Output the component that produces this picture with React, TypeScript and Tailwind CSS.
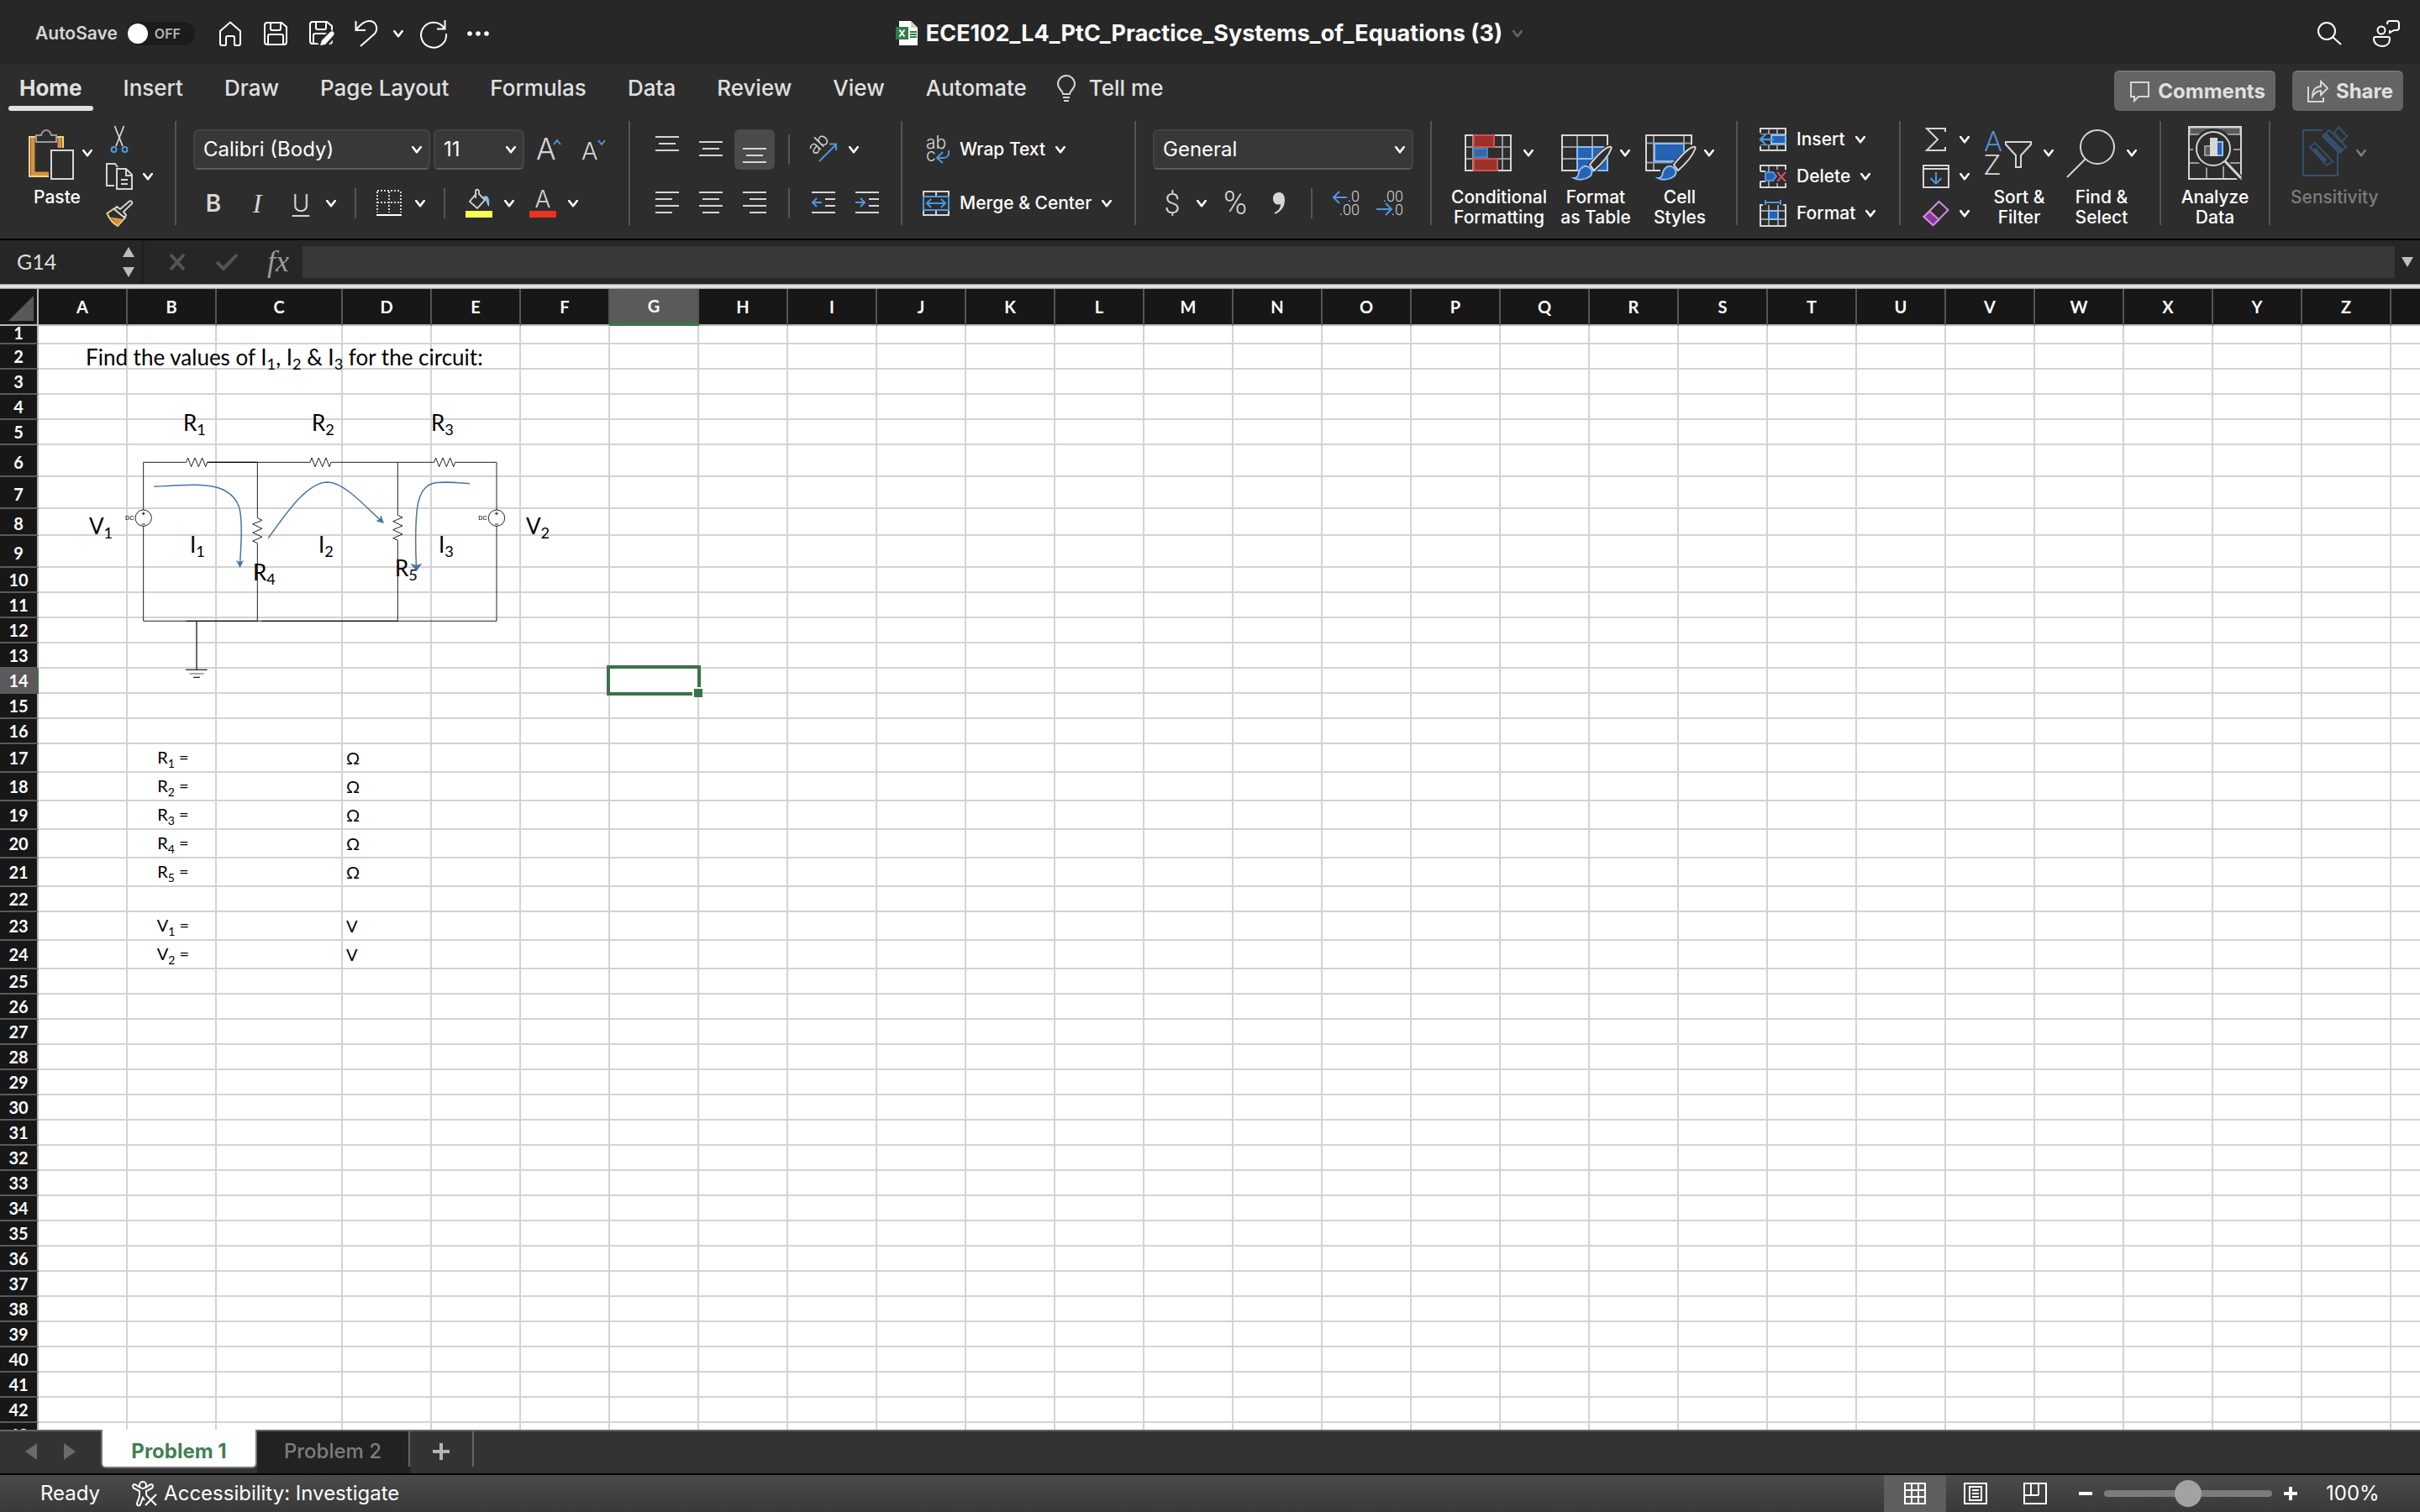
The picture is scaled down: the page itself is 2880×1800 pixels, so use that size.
import { ReactNode, useState } from "react";
import { clsx } from "clsx";

const LIGHT = "#d6d6d6";
const BLUE = "#4f97dc";
const FILL = "#2763b5";
const SKY = "#8cbdf0";

/* ---------- small building blocks ---------- */

const Chevron = ({ className }: { className?: string }) => (
	<svg viewBox="0 0 12 9" className={clsx("h-[9px] w-3 shrink-0", className)} fill="none" stroke="currentColor" strokeWidth="2.6">
		<path d="M1.2 1 6 7.2 10.8 1" strokeLinecap="round" strokeLinejoin="round" />
	</svg>
);

const Divider = () => <div className="h-[124px] w-0.5 shrink-0 bg-[#555555]" />;
const ShortDivider = ({ className }: { className?: string }) => <div className={clsx("h-9 w-0.5 shrink-0 bg-[#555555]", className)} />;

type IconProps = { w: number; h: number; children: ReactNode; className?: string; stroke?: string };

const Icon = ({ w, h, children, className, stroke = LIGHT }: IconProps) => (
	<svg width={w} height={h} viewBox={`0 0 ${w} ${h}`} fill="none" stroke={stroke} strokeWidth="2" className={clsx("shrink-0 overflow-visible", className)}>
		{children}
	</svg>
);

const IconButton = ({ label, children, className }: { label: string; children: ReactNode; className?: string }) => (
	<button type="button" aria-label={label} className={clsx("flex shrink-0 items-center justify-center", className)}>
		{children}
	</button>
);

type BigButtonProps = { lines: string[]; icon: ReactNode; chevron?: boolean; gap?: string; className?: string; labelClassName?: string };

const BigButton = ({ lines, icon, chevron = true, gap = "gap-2.5", className, labelClassName }: BigButtonProps) => (
	<button type="button" className={clsx("flex shrink-0 flex-col items-center gap-[9px]", className)}>
		<span className={clsx("flex items-center", gap)}>
			{icon}
			{chevron && <Chevron />}
		</span>
		<span className={clsx("text-[21px] leading-6 font-medium whitespace-nowrap", labelClassName)}>
			{lines.map((line) => (
				<span key={line} className="block">
					{line}
				</span>
			))}
		</span>
	</button>
);

const LabelButton = ({ icon, label, className }: { icon: ReactNode; label: string; className?: string }) => (
	<button type="button" className={clsx("flex items-center gap-3 text-[21px] leading-6 font-medium whitespace-nowrap", className)}>
		{icon}
		<span>{label}</span>
		<Chevron />
	</button>
);

const Picker = ({ label, value, className }: { label: string; value: string; className: string }) => (
	<label className={clsx("relative flex h-12 shrink-0 items-center rounded-md border-2 border-[#434343] border-b-[#5c5c5c] bg-[#383838]", className)}>
		<select aria-label={label} defaultValue={value} className="h-full w-full appearance-none bg-transparent pl-2.5 text-2xl text-white outline-none">
			<option>{value}</option>
		</select>
		<Chevron className="pointer-events-none absolute right-2" />
	</label>
);

/* ---------- icons ---------- */

const Lines = ({ rows, h = 36 }: { rows: [number, number, number][]; h?: number }) => (
	<Icon w={28} h={h}>
		{rows.map(([y, from, to]) => (
			<path key={y} d={`M${from} ${y}H${to}`} />
		))}
	</Icon>
);

const PasteIcon = () => (
	<Icon w={54} h={64}>
		<path d="M24 57H5V14M37 14v12" stroke="#d8923d" strokeWidth="5" />
		<path d="M24 60H1V13h8M33 13h8v13" stroke="#f2d28a" />
		<path d="M9 19V11h6c1-4 3-6 6-6s5 2 6 6h6v8z" stroke="#9a9a9a" fill="#2d2d2d" />
		<path d="M27 29h26v34H27z" fill="#2d2d2d" />
	</Icon>
);

const CutIcon = () => (
	<Icon w={32} h={32}>
		<path d="M10.500 0 20 24M21.500 0 12 24" strokeWidth="1.800" />
		<circle cx="9.500" cy="28" r="3" stroke={BLUE} />
		<circle cx="22.500" cy="28" r="3" stroke={BLUE} />
	</Icon>
);

const CopyIcon = () => (
	<Icon w={32} h={32}>
		<path d="M10 27H1V1h10l3 4" />
		<path d="M13 7h11l7 7v17H13zM24 7v8h7M18 20h8M18 25h8" />
	</Icon>
);

const BrushIcon = () => (
	<Icon w={32} h={32}>
		<path d="m1.500 16 8-5.500L23 21l-9 10C9 28 4 22 1.500 16z" stroke="#f2d28a" />
		<path d="M6 21c5 1 9 1 13 2l-5 7z" fill="#d8923d" stroke="#d8923d" strokeWidth="1" />
		<path d="m10 11 3-3 4 3L28 1.500c2-1 4 1 3 3L21 14l3 4-2 3z" fill="#2d2d2d" />
	</Icon>
);

const LetterIcon = ({ size, caret }: { size: number; caret: string }) => (
	<Icon w={30} h={30}>
		<text x="0" y="27" fontSize={size} fill={LIGHT} stroke="none" className="font-['Inter',sans-serif] font-light">
			A
		</text>
		<path d={caret} stroke={BLUE} />
	</Icon>
);

const BordersIcon = () => (
	<Icon w={30} h={32}>
		<path d="M1 1h28M1 15h28" strokeDasharray="2 2" />
		<path d="M1 2v25M15 2v25M29 2v25" strokeDasharray="2 2" />
		<path d="M0 30h30" stroke="#fff" />
	</Icon>
);

const FillIcon = () => (
	<Icon w={32} h={34}>
		<path d="M13 5 5 15l9 8 9-10-7-7V3c0-3-4-3-4 0v8" strokeWidth="1.800" />
		<path d="M21 9c6-3 8 2 7 12-3-2-2-6-5-8z" fill={SKY} stroke="none" />
		<path d="M0 26h32v8H0z" fill="#ffff54" stroke="none" />
	</Icon>
);

const FontColorIcon = () => (
	<Icon w={32} h={34}>
		<text x="16" y="22" textAnchor="middle" fontSize="28" fill={LIGHT} stroke="none" className="font-['Inter',sans-serif] font-light">
			A
		</text>
		<path d="M0 26h32v8H0z" fill="#eb3323" stroke="none" />
	</Icon>
);

const OrientationIcon = () => (
	<Icon w={32} h={32}>
		<text x="6" y="23" fontSize="22" fill={LIGHT} stroke="none" transform="rotate(-45 6 23)" className="font-['Inter',sans-serif] font-light">
			ab
		</text>
		<path d="M11 30 31 10M23 9.500h8V17" stroke={BLUE} />
	</Icon>
);

const IndentIcon = ({ arrow }: { arrow: string }) => (
	<Icon w={28} h={36}>
		<path d="M0 5h28M16 13h12M16 21h12M0 29h28" />
		<path d={arrow} stroke={BLUE} />
	</Icon>
);

const WrapIcon = () => (
	<Icon w={32} h={32}>
		<g fill={LIGHT} stroke="none" className="font-['Inter',sans-serif] font-light">
			<text x="4" y="15" fontSize="21">
				ab
			</text>
			<text x="4" y="30" fontSize="21">
				c
			</text>
		</g>
		<path d="M31 17c1 6-2 9-6 9h-7M24 19l-7 7 7 6" stroke={BLUE} />
	</Icon>
);

const MergeIcon = () => (
	<Icon w={32} h={32}>
		<path d="M1 8V2h30v6M16 2v6M1 24v6h30v-6M16 24v6" />
		<path d="M1 8h30v16H1zM5 16h22M10 11l-5 5 5 5M22 11l5 5-5 5" stroke={BLUE} />
	</Icon>
);

const DecimalIcon = ({ top, bottom, arrow }: { top: string; bottom: string; arrow: string }) => (
	<Icon w={32} h={36}>
		<g fill={LIGHT} stroke="none" textAnchor="end" fontSize="18" className="font-['Roboto',sans-serif] font-light">
			<text x="32" y="16">
				{top}
			</text>
			<text x="32" y="32">
				{bottom}
			</text>
		</g>
		<path d={arrow} stroke={BLUE} />
	</Icon>
);

const PaintBrush = () => (
	<>
		<path d="M34 46C42 36 50 27 57 25c3-1 3 1 2 3-3 8-11 17-20 25z" fill="#2d2d2d" strokeWidth="2" />
		<path d="M15 62c5 0 5-3 6-7 2-6 7-9 12-6 4 2 5 7 1 11-5 4-14 5-19 2z" fill={FILL} stroke={SKY} />
	</>
);

const ConditionalIcon = () => (
	<Icon w={56} h={64}>
		<path d="M1 25h54M1 39h54M45 11v42M27 25v14M10 11v42" stroke="#9a9a9a" />
		<path d="M1 11h54v42H1z" />
		<path d="M11 11h24v14H11zM11 39h28v14H11z" fill="#9c302b" stroke="#cf5350" />
		<path d="M11 27h16v10H11z" fill="#3069a4" stroke="#4384c3" />
	</Icon>
);

const FormatTableIcon = () => (
	<Icon w={60} h={64}>
		<path d="M1 25h54M1 39h54M19 11v42M37 11v42" stroke="#9a9a9a" />
		<path d="M19 25h36v28H19z" fill={FILL} stroke={SKY} />
		<path d="M37 25v28M19 39h36" stroke={SKY} />
		<path d="M19 53H1V11h54v12" />
		<path d="M29 48 52 24l8-3v10L42 54z" fill="#2d2d2d" stroke="none" />
		<PaintBrush />
	</Icon>
);

const CellStylesIcon = () => (
	<Icon w={60} h={64}>
		<path d="M1 20.500h54M1 43.500h54M10 11v42M46 11v42" stroke="#9a9a9a" />
		<path d="M11 21h35v21H11z" fill={FILL} stroke={SKY} />
		<path d="M18 53H1V11h54v12" />
		<path d="M22 60 30 46 54 23l6-3v34z" fill="#2d2d2d" stroke="none" />
		<PaintBrush />
	</Icon>
);

const InsertIcon = () => (
	<Icon w={32} h={32}>
		<path d="M11 3v26M21 3v26M1 10h30M1 22h30" stroke="#9a9a9a" />
		<path d="M1 8V3h30v26H1v-5" />
		<path d="M14 11h17v10H14z" fill={FILL} stroke={SKY} />
		<path d="M0 10h13v12H0z" fill="#2d2d2d" stroke="none" />
		<path d="M17 16H1M8 9l-7 7 7 7" stroke={BLUE} strokeWidth="2.400" />
	</Icon>
);

const DeleteIcon = () => (
	<Icon w={32} h={32}>
		<path d="M11 3v8M21 3v5M11 21v8M21 24v5" stroke="#9a9a9a" />
		<path d="M1 10V3h30v5M1 22v7h30v-5M1 10h6M1 22h6" />
		<path d="M7 11h9l4 5-4 5H7z" fill={FILL} stroke={BLUE} />
		<path d="m21 11 10 11M31 11 21 22" stroke="#d9534f" />
	</Icon>
);

const FormatIcon = () => (
	<Icon w={32} h={32}>
		<path d="M11 6v25M22 6v25M1 13h30M1 23h30" stroke="#9a9a9a" />
		<path d="M4 6H1v25h30V6h-3" />
		<path d="M11 13h11v10H11z" fill={FILL} stroke={SKY} />
		<path d="M7 3h18M7 0v6M25 0v6" stroke={BLUE} />
	</Icon>
);

const SigmaIcon = () => (
	<Icon w={32} h={32}>
		<path d="M27 7V3H5l13 13L5 29h22v-4" />
	</Icon>
);

const FillDownIcon = () => (
	<Icon w={32} h={32}>
		<path d="M1 3h30v26H1zM1 7h30" />
		<path d="M16 11v13M9.500 18l6.500 6.500 6.500-6.500" stroke={BLUE} />
	</Icon>
);

const EraserIcon = () => (
	<Icon w={32} h={32} stroke="#cf8fdc">
		<path d="m1.500 20 18-18 11 10-18 18z" />
		<path d="m1.500 20 7-6.500 11 10-7 6.500z" fill="#8a35a0" />
	</Icon>
);

const SortIcon = () => (
	<Icon w={56} h={64}>
		<g stroke="none" fontSize="34" textAnchor="middle" className="font-['Roboto',sans-serif] font-light">
			<text x="10" y="30" fill={BLUE}>
				A
			</text>
			<text x="9" y="58" fill={LIGHT}>
				Z
			</text>
		</g>
		<path d="M25 19h30v3L43 35v14h-6V35L25 22z" />
	</Icon>
);

const FindIcon = () => (
	<Icon w={58} h={64}>
		<circle cx="37" cy="25" r="20" />
		<path d="M23 39 1 61" />
	</Icon>
);

const AnalyzeIcon = () => (
	<Icon w={64} h={64}>
		<path d="M2 2h60v8H2z" fill="#5a5a5a" stroke="#9a9a9a" />
		<path d="M2 28h9M51 28h11M2 44h60M22 44v18M42 44v18" stroke="#9a9a9a" />
		<path d="M1 1h62v62H1z" />
		<circle cx="30" cy="27" r="23" fill="#2d2d2d" stroke="#2d2d2d" />
		<path d="m43 42 20 21" stroke="#2d2d2d" strokeWidth="7" />
		<circle cx="30" cy="27" r="20" fill="#2d2d2d" />
		<path d="m44 42 19 20" strokeWidth="3" />
		<path d="M20 24h7v11h-7z" fill="#5a5a5a" stroke="#9a9a9a" />
		<path d="M34 19h7v16h-7z" fill={FILL} stroke={SKY} />
		<path d="M26 14h9v22h-9z" fill={LIGHT} stroke="none" />
	</Icon>
);

const SensitivityIcon = () => (
	<Icon w={54} h={64} stroke="#35506a">
		<path d="M24 5H1v54h41V32" />
		<path d="m9 25 6-5 21 22-7 5z" />
		<path d="m14 27 14 15" strokeWidth="4" />
		<path d="m24 12 8-7 20 20-8 7z" />
		<path d="m24 12 4-3 20 20-4 3z" fill="#35506a" />
		<path d="m38 8 5-7 10 11-6 7z" />
	</Icon>
);

const SavePaths = () => (
	<>
		<path d="M8 1v7a2 2 0 0 0 2 2h8a2 2 0 0 0 2-2V1" />
		<path d="M5 27V17a2 2 0 0 1 2-2h14a2 2 0 0 1 2 2v10" />
		<path d="M4 1h17l6 5v18a3 3 0 0 1-3 3H4a3 3 0 0 1-3-3V4a3 3 0 0 1 3-3z" />
	</>
);

/* ---------- title bar and tabs ---------- */

const TitleBar = () => {
	const [autoSave, setAutoSave] = useState(false);

	return (
		<header className="grid h-[76px] shrink-0 grid-cols-[1fr_auto_1fr] items-center bg-[#272727] px-6 pt-1 text-white">
			<div className="flex items-center pl-[18px]">
				<label className="flex items-center gap-3 text-[21px] font-semibold text-[#d5d5d5]">
					AutoSave
					<span className="flex h-7 w-20 items-center rounded-full bg-[#1b1b1b]">
						<input type="checkbox" checked={autoSave} onChange={() => setAutoSave(!autoSave)} className="h-6 w-6 appearance-none rounded-full bg-white" />
						<span className="pl-2 text-base text-[#b5b5b5]">OFF</span>
					</span>
				</label>
				<nav className="ml-7 flex items-center">
					<IconButton label="Home">
						<Icon w={28} h={30} stroke="#fff">
							<path d="M2 27V12L14 1.500 26 12v15a2 2 0 0 1-2 2h-4a1 1 0 0 1-1-1v-8a2 2 0 0 0-2-2h-6a2 2 0 0 0-2 2v8a1 1 0 0 1-1 1H4a2 2 0 0 1-2-2z" />
						</Icon>
					</IconButton>
					<IconButton label="Save" className="ml-[26px]">
						<Icon w={28} h={28} stroke="#fff">
							<SavePaths />
						</Icon>
					</IconButton>
					<IconButton label="Save As" className="ml-[26px]">
						<Icon w={30} h={30} stroke="#fff">
							<SavePaths />
							<path d="M14 30 29 13" stroke="#272727" strokeWidth="11" />
							<path d="m13 29 2-6 10-10c3-2 6 1 4 4L19 28z" fill="#fff" stroke="none" />
						</Icon>
					</IconButton>
					<IconButton label="Undo" className="ml-6 gap-[18px]">
						<Icon w={28} h={32} stroke="#fff">
							<path d="M1.500 1v11H13M2 11C8 4 12 1 17 1c8 0 12 8 7 15L7 31" />
						</Icon>
						<Chevron />
					</IconButton>
					<IconButton label="Redo" className="ml-5">
						<Icon w={32} h={32} stroke="#fff">
							<path d="M29.500 0v10.500H20M29 10A15 15 0 1 0 31 16" />
						</Icon>
					</IconButton>
					<IconButton label="More" className="ml-6">
						<Icon w={26} h={8} stroke="none">
							<g fill="#fff">
								<circle cx="3" cy="4" r="2.800" />
								<circle cx="13" cy="4" r="2.800" />
								<circle cx="23" cy="4" r="2.800" />
							</g>
						</Icon>
					</IconButton>
				</nav>
			</div>

			<h1 className="flex items-center text-[27px] font-bold whitespace-nowrap">
				<Icon w={26} h={30} className="mr-2.5" stroke="none">
					<path d="M4 0h14l8 8v21H4z" fill="#fff" />
					<path d="M18 0v8h8z" fill="#cfcfcf" />
					<path d="M17 12h8v2h-8zM17 15h8v2h-8zM17 18h8v2h-8z" fill="#2f7d48" />
					<path d="M0 7h15v15H0z" fill="#2f7d48" />
					<path d="m4.500 10.500 6 8m0-8-6 8" stroke="#fff" strokeWidth="2" />
				</Icon>
				ECE102_L4_PtC_Practice_Systems_of_Equations (3)
				<Chevron className="ml-2.5 h-3 w-4 text-[#666666]" />
			</h1>

			<div className="flex items-center justify-end gap-[38px]">
				<IconButton label="Search">
					<Icon w={28} h={28} stroke="#fff">
						<circle cx="11" cy="11" r="10" />
						<path d="m18 18 10 9" />
					</Icon>
				</IconButton>
				<IconButton label="Presence">
					<Icon w={32} h={32} stroke="#fff">
						<circle cx="10" cy="12" r="4.500" />
						<path d="M3 20h15a2 2 0 0 1 2 2c0 6-4 9-9 9s-10-3-10-9a2 2 0 0 1 2-2z" />
						<path d="M17 5V4a3 3 0 0 1 3-3h8a3 3 0 0 1 3 3v5a3 3 0 0 1-3 3h-3l-5 3v-3" />
					</Icon>
				</IconButton>
			</div>
		</header>
	);
};

const MENU = ["Home", "Insert", "Draw", "Page Layout", "Formulas", "Data", "Review", "View", "Automate"];

const MenuBar = () => (
	<div className="flex h-[60px] shrink-0 items-start justify-between bg-[#2d2d2d] pr-5 pl-2.5 text-[26px] leading-8 text-[#e0e0e0]">
		<nav className="flex pt-[13px]">
			{MENU.map((item, idx) => (
				<a key={item} href="#" className={clsx("mr-[23px] block px-[13px] whitespace-nowrap", idx === 0 ? "font-bold" : "font-medium")}>
					{item}
					{idx === 0 && <span className="-mx-[13px] mt-[5px] block h-1.5 rounded-full bg-[#e0e0e0]" />}
				</a>
			))}
			<a href="#" className="flex items-start gap-4 font-medium whitespace-nowrap">
				<Icon w={22} h={32}>
					<path d="M7 23c0-4-6-6-6-12a10 10 0 0 1 20 0c0 6-6 8-6 12zM7 27h8M8 31h6" />
				</Icon>
				Tell me
			</a>
		</nav>
		<div className="flex gap-5 pt-2 text-2xl font-bold">
			<button type="button" className="flex h-12 items-center gap-[10px] rounded-md border-t-2 border-[#757575] bg-[#646464] pr-3 pl-[18px]">
				<Icon w={24} h={26}>
					<path d="M2 2h21v17H11l-5 5v-5H2z" />
				</Icon>
				Comments
			</button>
			<button type="button" className="flex h-12 items-center gap-2 rounded-md border-t-2 border-[#757575] bg-[#646464] pr-3 pl-[18px]">
				<Icon w={26} h={26}>
					<path d="M1 7v18h18v-5" />
					<path d="M6 19C6 11 10 7 16 7V1l8 8-8 8v-5c-4 0-7 2-10 7z" />
				</Icon>
				Share
			</button>
		</div>
	</div>
);

/* ---------- ribbon ---------- */

const Ribbon = () => (
	<div className="flex h-[150px] shrink-0 items-start overflow-hidden border-b-2 border-black bg-[#2d2d2d] pt-2 text-white">
		<div className="flex w-52 shrink-0 pt-1.5 pl-[34px]">
			<BigButton lines={["Paste"]} icon={<PasteIcon />} labelClassName="pr-2" />
			<div className="ml-4 flex flex-col gap-3">
				<IconButton label="Cut" className="w-8">
					<CutIcon />
				</IconButton>
				<IconButton label="Copy" className="gap-3">
					<CopyIcon />
					<Chevron />
				</IconButton>
				<IconButton label="Format Painter" className="w-8">
					<BrushIcon />
				</IconButton>
			</div>
		</div>
		<Divider />

		<div className="flex w-[538px] shrink-0 flex-col gap-[22px] pt-2.5 pl-5">
			<div className="flex h-12 items-center">
				<Picker label="Font" value="Calibri (Body)" className="w-[282px]" />
				<Picker label="Font size" value="11" className="ml-1 w-[108px]" />
				<IconButton label="Increase font size" className="ml-[14px]">
					<LetterIcon size={35} caret="m21 9 4-5 4 5" />
				</IconButton>
				<IconButton label="Decrease font size" className="ml-6">
					<LetterIcon size={29} caret="m20 4 4 5 4-5" />
				</IconButton>
			</div>
			<div className="flex h-9 items-center pl-2 text-[28px] leading-8 text-[#d6d6d6]">
				<IconButton label="Bold" className="w-8 font-semibold">
					B
				</IconButton>
				<IconButton label="Italic" className="ml-5 w-8 font-['Liberation_Serif',serif] text-[32px] italic">
					I
				</IconButton>
				<IconButton label="Underline" className="ml-5 gap-[14px]">
					<span className="w-8 font-light underline decoration-2 underline-offset-4">U</span>
					<Chevron className="text-white" />
				</IconButton>
				<ShortDivider className="ml-[22px]" />
				<IconButton label="Borders" className="ml-6 gap-4">
					<BordersIcon />
					<Chevron className="text-white" />
				</IconButton>
				<ShortDivider className="ml-[22px]" />
				<IconButton label="Fill colour" className="ml-6 gap-[14px]">
					<FillIcon />
					<Chevron className="text-white" />
				</IconButton>
				<IconButton label="Font colour" className="ml-[18px] gap-[14px]">
					<FontColorIcon />
					<Chevron className="text-white" />
				</IconButton>
			</div>
		</div>
		<Divider />

		<div className="flex w-[322px] shrink-0 flex-col gap-[22px] pt-2.5 pl-[30px]">
			<div className="flex h-12 items-center">
				<IconButton label="Top align">
					<Lines rows={[[3, 0, 28], [11, 4, 24], [19, 0, 28]]} />
				</IconButton>
				<IconButton label="Middle align" className="ml-6">
					<Lines rows={[[9, 0, 28], [17, 4, 24], [25, 0, 28]]} />
				</IconButton>
				<IconButton label="Bottom align" className="ml-[14px] h-12 w-12 rounded-md bg-[#4b4b4b]">
					<Lines rows={[[17, 0, 28], [25, 4, 24], [33, 0, 28]]} />
				</IconButton>
				<ShortDivider className="ml-4" />
				<IconButton label="Orientation" className="ml-6 gap-[14px]">
					<OrientationIcon />
					<Chevron />
				</IconButton>
			</div>
			<div className="flex h-9 items-center">
				<IconButton label="Align left">
					<Lines rows={[[5, 0, 28], [13, 0, 20], [21, 0, 28], [29, 0, 20]]} />
				</IconButton>
				<IconButton label="Center" className="ml-6">
					<Lines rows={[[5, 0, 28], [13, 4, 24], [21, 0, 28], [29, 4, 24]]} />
				</IconButton>
				<IconButton label="Align right" className="ml-6">
					<Lines rows={[[5, 0, 28], [13, 8, 28], [21, 0, 28], [29, 8, 28]]} />
				</IconButton>
				<ShortDivider className="ml-[26px]" />
				<IconButton label="Decrease indent" className="ml-[26px]">
					<IndentIcon arrow="M12 17H1M6 12l-5 5 5 5" />
				</IconButton>
				<IconButton label="Increase indent" className="ml-6">
					<IndentIcon arrow="M0 17h11M6 12l5 5-5 5" />
				</IconButton>
			</div>
		</div>
		<Divider />

		<div className="flex w-[276px] shrink-0 flex-col gap-[22px] pt-2.5 pl-6">
			<LabelButton label="Wrap Text" icon={<WrapIcon />} className="h-12" />
			<LabelButton label="Merge & Center" icon={<MergeIcon />} className="h-9" />
		</div>
		<Divider />

		<div className="flex w-[350px] shrink-0 flex-col gap-[22px] pt-2.5 pl-5">
			<Picker label="Number format" value="General" className="w-[310px]" />
			<div className="flex h-9 items-center pl-2 text-[34px] leading-9 font-light text-[#d6d6d6]">
				<IconButton label="Currency" className="gap-[14px] font-['Roboto',sans-serif]">
					<span className="w-[30px]">$</span>
					<Chevron className="text-white" />
				</IconButton>
				<IconButton label="Percent" className="ml-[18px] w-8 font-['Roboto',sans-serif] text-[38px]">
					%
				</IconButton>
				<IconButton label="Comma style" className="ml-5 w-8">
					<Icon w={16} h={28} stroke="none">
						<path d="M8 1c5 0 7 4 7 9 0 9-5 14-12 17v-2c4-2 7-5 7-10-5 2-9-1-9-7 0-4 3-7 7-7z" fill={LIGHT} />
					</Icon>
				</IconButton>
				<ShortDivider className="ml-[22px]" />
				<IconButton label="Increase decimal" className="ml-6">
					<DecimalIcon top=".0" bottom=".00" arrow="M17 11H1M8 4l-7 7 7 7" />
				</IconButton>
				<IconButton label="Decrease decimal" className="ml-5">
					<DecimalIcon top=".00" bottom=".0" arrow="M0 25h17M11 18l7 7-7 7" />
				</IconButton>
			</div>
		</div>
		<Divider />

		<div className="flex w-[362px] shrink-0 gap-[18px] pt-1.5 pl-6">
			<BigButton lines={["Conditional", "Formatting"]} icon={<ConditionalIcon />} gap="gap-[14px]" className="w-28" />
			<BigButton lines={["Format", "as Table"]} icon={<FormatTableIcon />} className="w-[82px]" />
			<BigButton lines={["Cell", "Styles"]} icon={<CellStylesIcon />} className="w-[82px]" />
		</div>
		<Divider />

		<div className="flex w-48 shrink-0 flex-col items-start gap-3 pt-1.5 pl-[26px]">
			<LabelButton label="Insert" icon={<InsertIcon />} />
			<LabelButton label="Delete" icon={<DeleteIcon />} />
			<LabelButton label="Format" icon={<FormatIcon />} />
		</div>
		<Divider />

		<div className="flex w-[308px] shrink-0 pt-1.5 pl-[26px]">
			<div className="flex flex-col gap-3">
				<IconButton label="AutoSum" className="gap-3">
					<SigmaIcon />
					<Chevron />
				</IconButton>
				<IconButton label="Fill" className="gap-3">
					<FillDownIcon />
					<Chevron />
				</IconButton>
				<IconButton label="Clear" className="gap-3">
					<EraserIcon />
					<Chevron />
				</IconButton>
			</div>
			<BigButton lines={["Sort &", "Filter"]} icon={<SortIcon />} gap="gap-[14px]" className="ml-[18px] w-[82px]" />
			<BigButton lines={["Find &", "Select"]} icon={<FindIcon />} gap="gap-[14px]" className="ml-4 w-[82px]" />
		</div>
		<Divider />

		<div className="flex w-32 shrink-0 justify-center pt-1.5">
			<BigButton lines={["Analyze", "Data"]} icon={<AnalyzeIcon />} chevron={false} />
		</div>
		<Divider />

		<div className="flex shrink-0 pt-1.5 pl-6">
			<BigButton lines={["Sensitivity"]} icon={<SensitivityIcon />} className="text-[#7d7d7d]" />
		</div>
	</div>
);

const FormulaBar = () => (
	<div className="flex h-[52px] shrink-0 items-center bg-[#262626]">
		<div className="flex h-full w-[172px] shrink-0 items-center justify-between border-r-4 border-[#202020] pr-2 pl-5">
			<input aria-label="Name box" defaultValue="G14" className="w-24 bg-transparent font-['Lato',sans-serif] text-[25px] text-[#dedede] outline-none" />
			<Icon w={14} h={36} stroke="none">
				<path d="M7 0 14 12H0zM7 36 0 24h14z" fill="#bcbcbc" />
			</Icon>
		</div>
		<IconButton label="Cancel" className="ml-7">
			<Icon w={22} h={22} stroke="#555555">
				<path d="m3 2 16 18M19 2 3 20" strokeWidth="4" />
			</Icon>
		</IconButton>
		<IconButton label="Enter" className="ml-[34px]">
			<Icon w={28} h={22} stroke="#555555">
				<path d="m2 11 8 8L26 2" strokeWidth="4" />
			</Icon>
		</IconButton>
		<button type="button" className="ml-[34px] w-8 pb-0.5 text-left font-['Liberation_Serif',serif] text-[36px] leading-9 text-[#9a9a9a] italic">
			fx
		</button>
		<input aria-label="Formula" className="ml-[10px] h-[38px] min-w-0 grow bg-[#383838] px-2 text-white outline-none" />
		<IconButton label="Expand formula bar" className="mr-2 ml-2 w-3.5">
			<Icon w={14} h={12} stroke="none">
				<path d="M0 0h14L7 12z" fill="#c0c0c0" />
			</Icon>
		</IconButton>
	</div>
);

/* ---------- sheet ---------- */

const COLUMNS = "ABCDEFGHIJKLMNOPQRSTUVWXYZ".split("");

const Sub = ({ base, sub, rest = "" }: { base: string; sub: string; rest?: string }) => (
	<>
		{base}
		<span className="relative top-[5px] text-[70%]">{sub}</span>
		{rest}
	</>
);

const CELLS: Record<string, ReactNode> = {
	B17: <Sub base="R" sub="1" rest=" =" />,
	B18: <Sub base="R" sub="2" rest=" =" />,
	B19: <Sub base="R" sub="3" rest=" =" />,
	B20: <Sub base="R" sub="4" rest=" =" />,
	B21: <Sub base="R" sub="5" rest=" =" />,
	B23: <Sub base="V" sub="1" rest=" =" />,
	B24: <Sub base="V" sub="2" rest=" =" />,
	D17: "Ω",
	D18: "Ω",
	D19: "Ω",
	D20: "Ω",
	D21: "Ω",
	D23: "V",
	D24: "V",
};

const rowHeight = (row: number) => {
	if (row === 1) return "h-[22px]";
	if (row === 6 || row === 7 || row === 9) return "h-[38px]";
	if (row === 8) return "h-8";
	if ((row >= 17 && row <= 21) || row === 23 || row === 24) return "h-[34px]";
	return "h-[30px]";
};

const LABELS = [
	{ base: "R", sub: "1", place: "left-[218px] top-[143px]" },
	{ base: "R", sub: "2", place: "left-[371px] top-[143px]" },
	{ base: "R", sub: "3", place: "left-[513px] top-[143px]" },
	{ base: "V", sub: "1", place: "left-[106px] top-[266px]" },
	{ base: "V", sub: "2", place: "left-[626px] top-[266px]" },
	{ base: "I", sub: "1", place: "left-[226px] top-[288px]" },
	{ base: "I", sub: "2", place: "left-[379px] top-[288px]" },
	{ base: "I", sub: "3", place: "left-[522px] top-[288px]" },
	{ base: "R", sub: "4", place: "left-[301px] top-[321px]" },
	{ base: "R", sub: "5", place: "left-[470px] top-[316px]" },
];

const ZIGZAG = "l6-16 12 32 13-32 13 32 13-32 12 32 6-16";
const ZIGZAG_DOWN = "l17 8-34 14 34 16-34 14 34 16-34 14 17 8";

const Source = ({ x }: { x: number }) => (
	<g>
		<circle cx={x} cy="410" r="29" />
		<path d={`M${x - 6} 394h12M${x} 388v12M${x - 6} 432h12`} />
		<text x={x - 65} y="417" fontSize="24" fill="#000" stroke="none" className="font-['Roboto',sans-serif]">
			DC
		</text>
	</g>
);

// Three-mesh circuit, drawn at three units to the pixel
const Circuit = () => (
	<svg viewBox="0 0 1560 1020" className="absolute top-[136px] left-[100px] h-[340px] w-[520px]" fill="none" stroke="#222" strokeWidth="3">
		<path d={`M212 381V211H365${ZIGZAG}H807${ZIGZAG}H1250${ZIGZAG}H1473V381`} />
		<path d="M212 439V778H1473V439" />
		<path d={`M619 211V410${ZIGZAG_DOWN}V778`} />
		<path d={`M1120 211V400${ZIGZAG_DOWN}V778`} />
		<path d="M440 211H619M365 778H619M634 778H1120" stroke="#000" strokeWidth="4" />
		<path d="M402 778V952M363 952H440M390 979H414" strokeWidth="4" />
		<path d="M376 966H428" stroke="#999" strokeWidth="5" />
		<Source x={212} />
		<Source x={1473} />
		<g stroke="#4a72a4" strokeWidth="4.500">
			<path d="M250 298C380 290 430 288 475 301C530 318 550 350 557 385C567 440 560 510 557 572" />
			<path d="M658 482C730 380 800 282 870 282C930 284 1000 365 1062 421" />
			<path d="M1377 287C1320 283 1270 278 1243 287C1215 296 1200 320 1192 360C1181 420 1183 500 1186 580" />
		</g>
		<g fill="#4a72a4" stroke="none">
			<path d="m557 588-14-27 14 7 13-7z" />
			<path d="m1071 429-29-8 14-6 4-16z" />
			<path d="m1187 600-22-28 21 7 21-7z" />
		</g>
	</svg>
);

const Sheet = () => (
	<main className="relative min-h-0 grow overflow-hidden bg-white font-['Lato',sans-serif]">
		<table className="w-full table-fixed border-separate border-spacing-0 text-[20px] leading-6 text-black">
			<colgroup>
				<col className="w-[46px]" />
				{COLUMNS.map((col) => (
					<col key={col} className={col === "C" ? "w-[150px]" : "w-[106px]"} />
				))}
				<col />
			</colgroup>
			<thead>
				<tr className="h-11 bg-[#171717] text-[20px] text-white">
					<th className="border-r-2 border-b-2 border-[#b9b9b9] p-0">
						<svg viewBox="0 0 44 42" className="h-[42px] w-11">
							<path d="M40 8v30H10z" fill="#585858" />
						</svg>
					</th>
					{COLUMNS.map((col) => (
						<th
							key={col}
							scope="col"
							className={clsx(
								"border-r-2 border-b-2 border-r-[#555555] p-0 text-center font-bold",
								col === "G" ? "border-b-4 border-b-[#3b734a] bg-[#5a5a5a]" : "border-b-[#b9b9b9]"
							)}
						>
							{col}
						</th>
					))}
					<th className="border-b-2 border-[#b9b9b9] p-0" />
				</tr>
			</thead>
			<tbody>
				{Array.from({ length: 43 }, (_, idx) => idx + 1).map((row) => (
					<tr key={row} className={rowHeight(row)}>
						<th
							scope="row"
							className={clsx(
								"border-r-2 border-b-2 border-b-[#5a5a5a] p-0 font-bold text-white",
								row >= 6 && row <= 9 && "pt-1",
								row === 14 ? "border-r-[#3b734a] bg-[#5a5a5a]" : "border-r-[#b9b9b9] bg-[#171717]"
							)}
						>
							{row === 1 ? <div className="flex h-5 items-end justify-center overflow-hidden">{row}</div> : row}
						</th>
						{COLUMNS.map((col) => (
							<td
								key={col}
								className={clsx("border-r-2 border-b-2 border-[#d3d3d3] p-0 pl-1 whitespace-nowrap", col === "B" && "text-center")}
							>
								{CELLS[col + row]}
							</td>
						))}
						<td className="border-b-2 border-[#d3d3d3] p-0" />
					</tr>
				))}
			</tbody>
		</table>

		<Circuit />
		<p className="absolute top-[65px] left-[102px] text-[26px] leading-8 whitespace-nowrap text-black">
			Find the values of <Sub base="I" sub="1" />, <Sub base="I" sub="2" /> & <Sub base="I" sub="3" /> for the circuit:
		</p>
		{LABELS.map(({ base, sub, place }) => (
			<span key={base + sub} className={clsx("absolute text-[26px] leading-8 text-black", place)}>
				<Sub base={base} sub={sub} />
			</span>
		))}
		<div className="absolute top-[448px] left-[722px] h-9 w-28 border-4 border-[#3b734a]">
			<span className="absolute -right-[6px] -bottom-[6px] h-3 w-3 border-t-2 border-l-2 border-white bg-[#3b734a]" />
		</div>
	</main>
);

/* ---------- bottom bars ---------- */

const SheetTabs = () => (
	<div className="flex h-[52px] shrink-0 border-t-2 border-[#666666] bg-[#333333] text-2xl">
		<div className="flex w-[120px] shrink-0 items-center gap-8 pb-0.5 pl-[30px]">
			<IconButton label="Previous sheet">
				<Icon w={14} h={20} stroke="none">
					<path d="M14 0v20L0 10z" fill="#6a6a6a" />
				</Icon>
			</IconButton>
			<IconButton label="Next sheet">
				<Icon w={14} h={20} stroke="none">
					<path d="M0 0v20l14-10z" fill="#6a6a6a" />
				</Icon>
			</IconButton>
		</div>
		<button type="button" className="-mt-0.5 flex h-[46px] w-[186px] items-center justify-center rounded-b-md border-x-2 border-b-2 border-[#777777] bg-white pt-2 font-bold text-[#3f8252]">
			Problem 1
		</button>
		<button type="button" className="flex w-[182px] items-start justify-center bg-[#222222] text-[#7d7d7d]">
			<span className="flex h-[42px] w-full items-center justify-center border-r-2 border-[#666666] pt-1.5 font-medium">Problem 2</span>
		</button>
		<button type="button" aria-label="Add sheet" className="flex h-[42px] w-[76px] items-center justify-center border-r-2 border-[#666666] pt-1.5">
			<Icon w={20} h={20} stroke="#b5b5b5">
				<path d="M10 0v20M0 10h20" strokeWidth="4" />
			</Icon>
		</button>
	</div>
);

const StatusBar = () => (
	<footer className="flex h-[46px] shrink-0 items-center border-t-2 border-black bg-linear-to-b from-[#4b4b4b] to-[#393939] pl-12 text-2xl text-white">
		<span>Ready</span>
		<button type="button" className="ml-[38px] flex items-center gap-2">
			<Icon w={30} h={30} stroke="#fff">
				<circle cx="13" cy="5" r="4" />
				<path d="M10 8C7 7 5 4 3 4S0 8 3 9l6 3v6l-3 9c0 3 3 3 4 1l3-8 2 3M16 8c3-1 5-4 7-4s3 4 0 5l-6 3v5M17 17l12 12M29 16 16 29" />
			</Icon>
			Accessibility: Investigate
		</button>
		<div className="ml-auto flex h-full items-center">
			<IconButton label="Normal view" className="h-full w-[74px] bg-[#5e5e5e]">
				<Icon w={26} h={26} stroke="#fff">
					<path d="M1 1h24v24H1zM9 1v24M17 1v24M1 9h24M1 17h24" />
				</Icon>
			</IconButton>
			<IconButton label="Page layout view" className="ml-[21px]">
				<Icon w={28} h={26} stroke="#fff">
					<path d="M1 1h26v24H1zM7 5h14v16H7zM10 9h8M10 13h8M10 17h8" />
				</Icon>
			</IconButton>
			<IconButton label="Page break view" className="ml-[43px]">
				<Icon w={28} h={26} stroke="#fff">
					<path d="M1 1h26v24H1zM9 1v14M18 1v14M1 15h17" />
				</Icon>
			</IconButton>
			<IconButton label="Zoom out" className="ml-[38px]">
				<Icon w={16} h={16} stroke="#fff">
					<path d="M0 8h16" strokeWidth="4" />
				</Icon>
			</IconButton>
			<input
				type="range"
				aria-label="Zoom"
				min={0}
				max={100}
				defaultValue={50}
				className="mx-[14px] h-2 w-[200px] appearance-none rounded-full bg-[#7b7b7b] [&::-webkit-slider-thumb]:h-8 [&::-webkit-slider-thumb]:w-8 [&::-webkit-slider-thumb]:appearance-none [&::-webkit-slider-thumb]:rounded-full [&::-webkit-slider-thumb]:bg-[#a2a2a2]"
			/>
			<IconButton label="Zoom in">
				<Icon w={16} h={16} stroke="#fff">
					<path d="M0 8h16M8 0v16" strokeWidth="4" />
				</Icon>
			</IconButton>
			<span className="w-[146px] pl-[34px]">100%</span>
		</div>
	</footer>
);

export default function App() {
	return (
		<div className="flex h-screen w-full flex-col overflow-hidden bg-[#272727] font-['Inter',sans-serif]">
			<TitleBar />
			<MenuBar />
			<Ribbon />
			<FormulaBar />
			<div className="h-1.5 shrink-0 bg-linear-to-b from-[#9a9a9a] via-white to-[#9a9a9a]" />
			<Sheet />
			<SheetTabs />
			<StatusBar />
		</div>
	);
}
